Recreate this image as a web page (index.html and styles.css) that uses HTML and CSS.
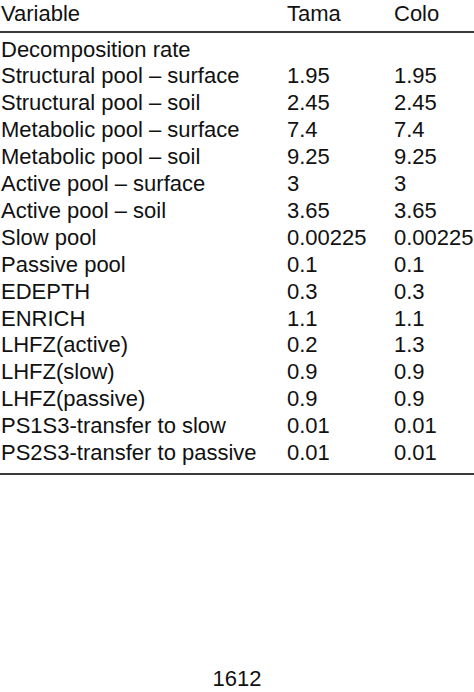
FILE: index.html
```html
<!DOCTYPE html>
<html>
<head>
<meta charset="utf-8">
<link rel="stylesheet" href="styles.css">
</head>
<body>
<div class="page">
  <div class="row head"><span>Variable</span><span>Tama</span><span>Colo</span></div>
  <div class="body">
    <div class="row"><span>Decomposition rate</span><span></span><span></span></div>
    <div class="row"><span>Structural pool – surface</span><span>1.95</span><span>1.95</span></div>
    <div class="row"><span>Structural pool – soil</span><span>2.45</span><span>2.45</span></div>
    <div class="row"><span>Metabolic pool – surface</span><span>7.4</span><span>7.4</span></div>
    <div class="row"><span>Metabolic pool – soil</span><span>9.25</span><span>9.25</span></div>
    <div class="row"><span>Active pool – surface</span><span>3</span><span>3</span></div>
    <div class="row"><span>Active pool – soil</span><span>3.65</span><span>3.65</span></div>
    <div class="row"><span>Slow pool</span><span>0.00225</span><span>0.00225</span></div>
    <div class="row"><span>Passive pool</span><span>0.1</span><span>0.1</span></div>
    <div class="row"><span>EDEPTH</span><span>0.3</span><span>0.3</span></div>
    <div class="row"><span>ENRICH</span><span>1.1</span><span>1.1</span></div>
    <div class="row"><span>LHFZ(active)</span><span>0.2</span><span>1.3</span></div>
    <div class="row"><span>LHFZ(slow)</span><span>0.9</span><span>0.9</span></div>
    <div class="row"><span>LHFZ(passive)</span><span>0.9</span><span>0.9</span></div>
    <div class="row"><span>PS1S3-transfer to slow</span><span>0.01</span><span>0.01</span></div>
    <div class="row"><span>PS2S3-transfer to passive</span><span>0.01</span><span>0.01</span></div>
  </div>
  <div class="folio">1612</div>
</div>
</body>
</html>
```
FILE: styles.css
```css
html, body { margin: 0; padding: 0; background: #fff; }
body { width: 474px; height: 692px; overflow: hidden; }
.page {
  font-family: "Liberation Sans", Arial, sans-serif;
  font-size: 22px;
  color: #111;
  display: flex;
  flex-direction: column;
  height: 692px;
}
.row {
  display: grid;
  grid-template-columns: 286px 107px 81px;
  height: 26.9px;
  line-height: 27px;
  white-space: nowrap;
  padding-left: 1px;
}
.row span { overflow: visible; }
.head {
  height: 31px;
  line-height: 27px;
  border-bottom: 2px solid #3a3a3a;
}
.body {
  padding-top: 2.6px;
  padding-bottom: 7px;
  border-bottom: 2px solid #3a3a3a;
}
.folio {
  margin-top: auto;
  text-align: center;
  font-size: 22px;
  height: 24px;
  line-height: 22px;
}
```
